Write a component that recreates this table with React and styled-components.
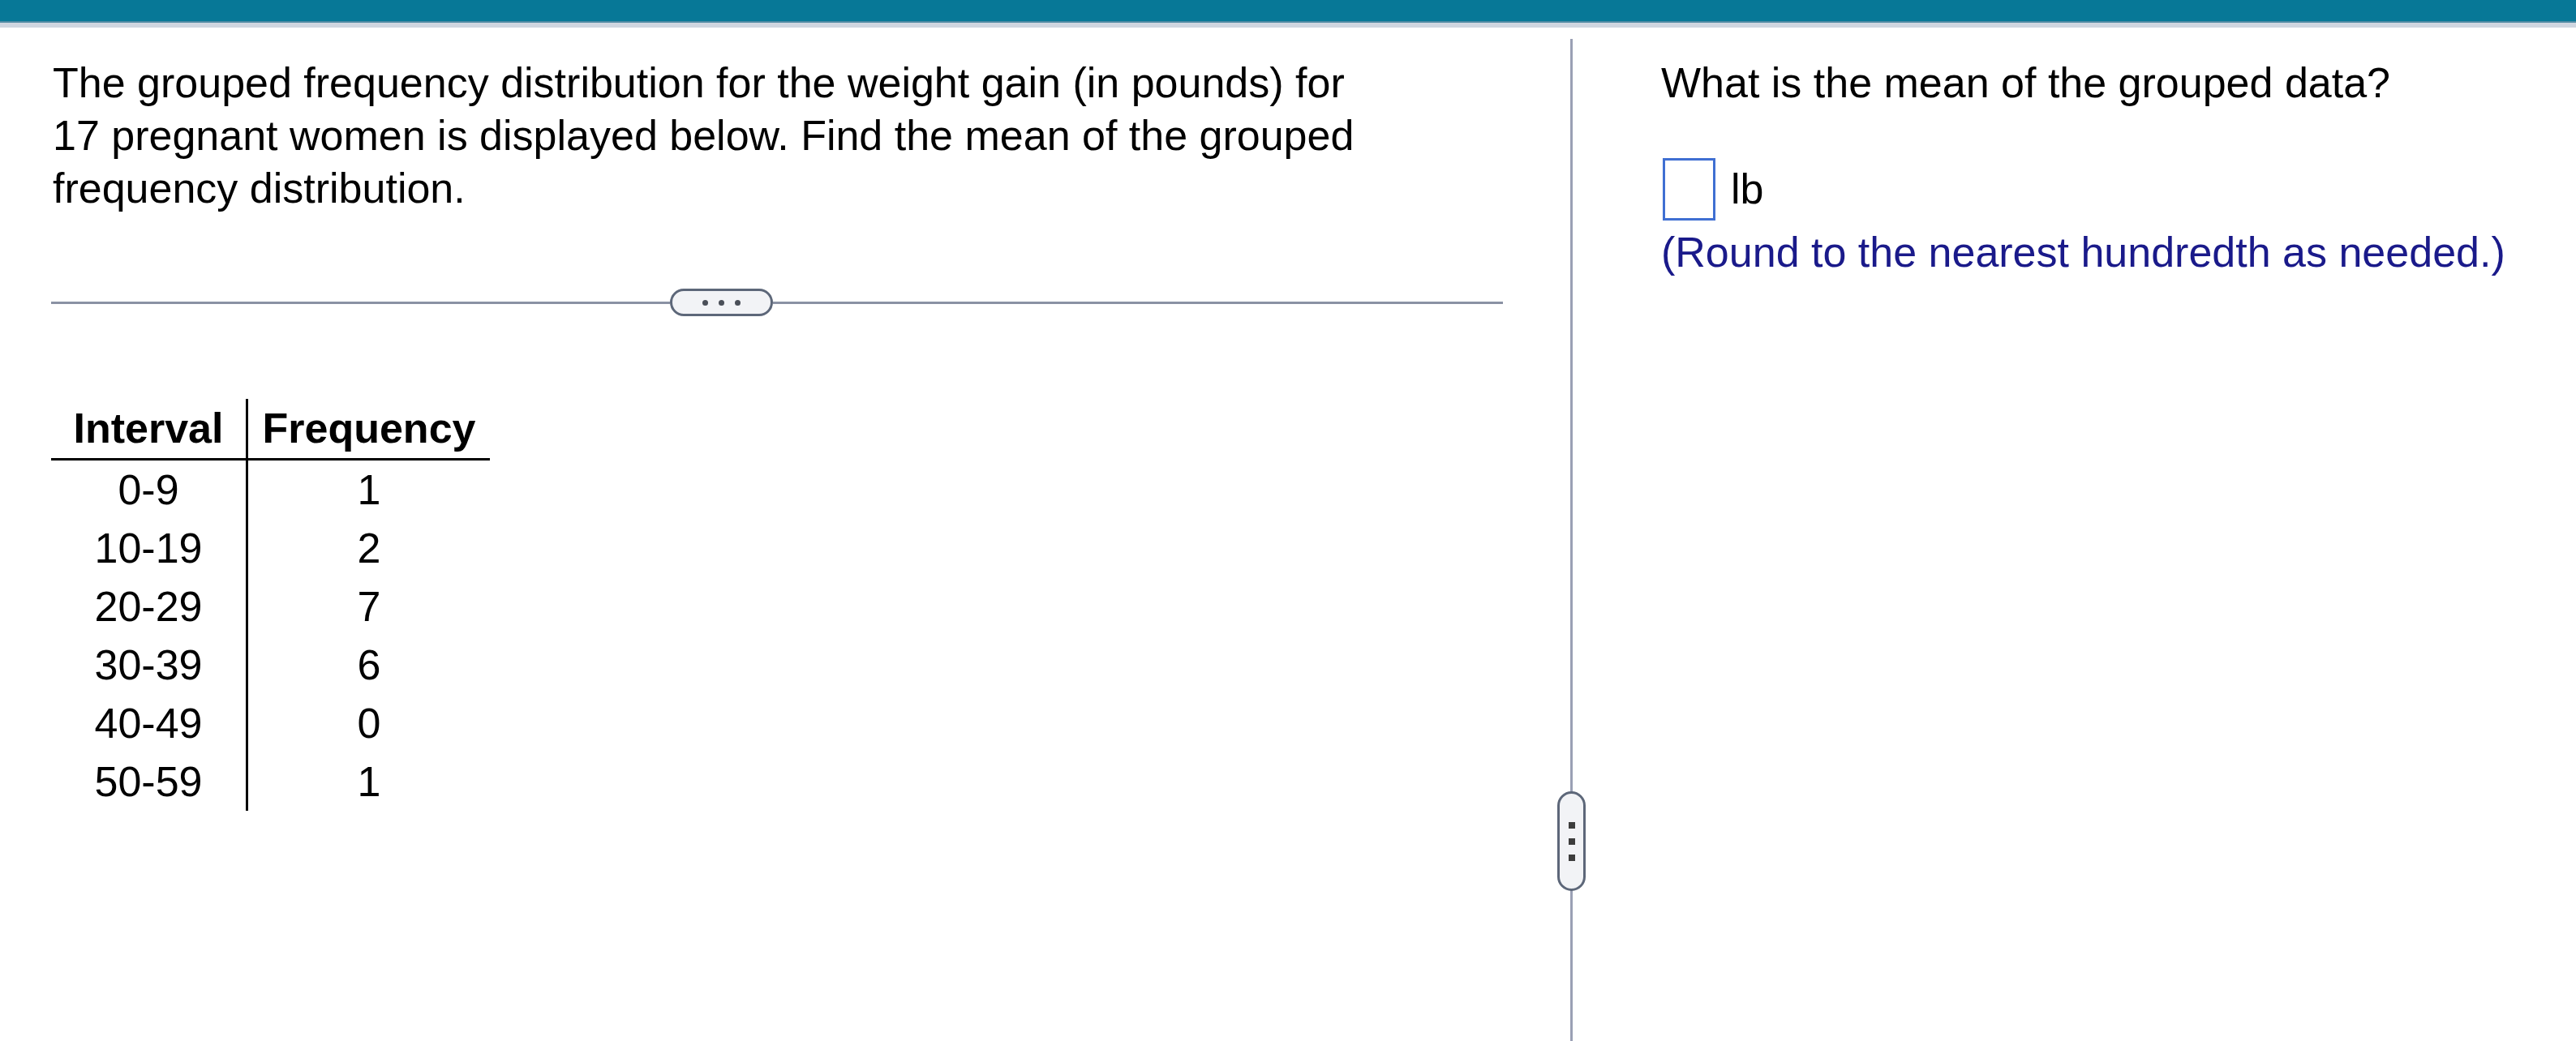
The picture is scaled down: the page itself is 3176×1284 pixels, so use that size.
import React from 'react';
import styled, { createGlobalStyle } from 'styled-components';

const rows = [
    { interval: '0-9', freq: 1 },
    { interval: '10-19', freq: 2 },
    { interval: '20-29', freq: 7 },
    { interval: '30-39', freq: 6 },
    { interval: '40-49', freq: 0 },
    { interval: '50-59', freq: 1 },
];

const GlobalStyle = createGlobalStyle`
    html, body {
        margin: 0;
        padding: 0;
        background: #fff;
    }
    body {
        font-family: "Liberation Sans", Arial, sans-serif;
        color: #000;
    }
`

const App = () => {
    return (
        <Page>
            <GlobalStyle />
            <TopBar />
            <Main>
                <LeftPane>
                    <Prompt>
                        The grouped frequency distribution for the weight gain (in pounds) for
                        17 pregnant women is displayed below. Find the mean of the grouped
                        frequency distribution.
                    </Prompt>
                    <Separator>
                        <Rule width='763px' />
                        <MoreButton aria-label='more'>
                            <Dot /><Dot /><Dot />
                        </MoreButton>
                        <Rule width='900px' />
                    </Separator>
                    <Table>
                        <thead>
                            <tr>
                                <Th>Interval</Th>
                                <Th>Frequency</Th>
                            </tr>
                        </thead>
                        <tbody>
                            {rows.map((row) => (
                                <tr key={row.interval}>
                                    <Td>{row.interval}</Td>
                                    <Td>{row.freq}</Td>
                                </tr>
                            ))}
                        </tbody>
                    </Table>
                </LeftPane>
                <Divider>
                    <Handle>
                        <Square /><Square /><Square />
                    </Handle>
                </Divider>
                <RightPane>
                    <Question>What is the mean of the grouped data?</Question>
                    <AnswerRow>
                        <AnswerBox />
                        <Unit>lb</Unit>
                    </AnswerRow>
                    <Hint>(Round to the nearest hundredth as needed.)</Hint>
                </RightPane>
            </Main>
        </Page>
    )
}

export default App

const Page = styled.div`
    width: 3176px;
    height: 1284px;
    overflow: hidden;
    display: flex;
    flex-direction: column;
`

const TopBar = styled.div`
    height: 28px;
    flex: none;
    background: #077897;
    border-bottom: 6px solid #cfd6e0;
    box-shadow: inset 0 -2px 0 #4f8aa3;
`

const Main = styled.div`
    flex: 1;
    display: flex;
    min-height: 0;
`

const LeftPane = styled.div`
    width: 1936px;
    flex: none;
    padding: 36px 0 0 63px;
    box-sizing: border-box;
`

const Prompt = styled.p`
    margin: 0 0 0 2px;
    width: 1630px;
    font-size: 52px;
    line-height: 65px;
`

const Separator = styled.div`
    display: flex;
    align-items: center;
    height: 34px;
    margin-top: 91px;
`

const Rule = styled.div`
    width: ${(p) => p.width};
    height: 3px;
    background: #8a92a4;
`

const MoreButton = styled.div`
    width: 127px;
    height: 34px;
    box-sizing: border-box;
    border: 3px solid #5d6779;
    border-radius: 17px;
    background: #f2f3f6;
    display: flex;
    align-items: center;
    justify-content: center;
    gap: 13px;
`

const Dot = styled.span`
    width: 7px;
    height: 7px;
    border-radius: 50%;
    background: #4a4f58;
`

const Table = styled.table`
    margin-top: 102px;
    border-collapse: collapse;
    font-size: 52px;
    color: #000;

    th:first-child, td:first-child {
        width: 240px;
        border-right: 3px solid #000;
    }
    th:last-child, td:last-child {
        width: 298px;
    }
`

const Th = styled.th`
    height: 73px;
    padding: 0;
    font-weight: bold;
    line-height: 63px;
    text-align: center;
    border-bottom: 3px solid #000;
`

const Td = styled.td`
    height: 72px;
    padding: 0;
    line-height: 63px;
    text-align: center;
`

const Divider = styled.div`
    width: 3px;
    flex: none;
    margin-top: 14px;
    background: #9aa0b4;
    position: relative;
`

const Handle = styled.div`
    position: absolute;
    top: 928px;
    left: -16px;
    width: 35px;
    height: 123px;
    box-sizing: border-box;
    border: 3px solid #5d6779;
    border-radius: 18px;
    background: #f2f3f6;
    display: flex;
    flex-direction: column;
    align-items: center;
    justify-content: center;
    gap: 12px;
`

const Square = styled.span`
    width: 8px;
    height: 8px;
    background: #3d3d3d;
`

const RightPane = styled.div`
    flex: 1;
    padding: 36px 0 0 109px;
`

const Question = styled.p`
    margin: 0;
    font-size: 52px;
    line-height: 65px;
`

const AnswerRow = styled.div`
    display: flex;
    align-items: center;
    gap: 19px;
    margin-top: 60px;
    padding-left: 2px;
`

const AnswerBox = styled.div`
    width: 65px;
    height: 77px;
    box-sizing: border-box;
    border: 3px solid #3f6fd2;
    background: #fff;
`

const Unit = styled.span`
    font-size: 52px;
    line-height: 63px;
`

const Hint = styled.p`
    margin: 8px 0 0;
    font-size: 52px;
    line-height: 63px;
    color: #1a1a8a;
`
